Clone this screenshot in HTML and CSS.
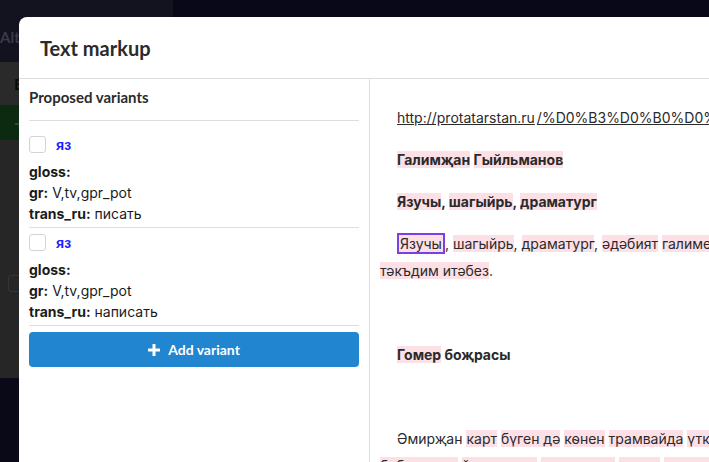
FILE: index.html
```html
<!DOCTYPE html>
<html lang="tt">
<head>
<meta charset="utf-8">
<title>Text markup</title>
<link rel="stylesheet" href="styles.css">
</head>
<body>
<div class="page">
  <div class="topbar">
    <div class="brand">Altai</div>
    <div class="topfill"></div>
  </div>
  <div class="band band-gray"><span class="band-letter">E</span></div>
  <div class="band band-green"><span class="band-plus">+</span></div>
  <div class="band band-panel"><span class="band-box"></span></div>
</div>

<div class="modal">
  <div class="modal-header">Text markup</div>
  <div class="modal-body">
    <aside class="variants">
      <div class="variants-title">Proposed variants</div>
      <div class="variant-list">
        <div class="variant">
          <div class="variant-head">
            <span class="checkbox"></span>
            <span class="lemma">яз</span>
          </div>
          <div class="line"><b>gloss:</b></div>
          <div class="line"><b>gr:</b> V,tv,gpr_pot</div>
          <div class="line"><b>trans_ru:</b> писать</div>
        </div>
        <div class="variant">
          <div class="variant-head">
            <span class="checkbox"></span>
            <span class="lemma">яз</span>
          </div>
          <div class="line"><b>gloss:</b></div>
          <div class="line"><b>gr:</b> V,tv,gpr_pot</div>
          <div class="line"><b>trans_ru:</b> написать</div>
        </div>
      </div>
      <button class="add-btn" type="button">
        <svg class="plus" width="12" height="12" viewBox="0 0 12 12" aria-hidden="true">
          <rect x="4.5" y="0" width="3" height="12" rx="0.5" fill="#fff"/>
          <rect x="0" y="4.5" width="12" height="3" rx="0.5" fill="#fff"/>
        </svg>
        <span>Add variant</span>
      </button>
    </aside>

    <section class="text">
      <p><a class="link" href="#">http://protatarstan.ru</a><a class="link" href="#">/%D0%B3%D0%B0%D0%B8%D0%BC%D2%97%D0%B0%D0%BD</a></p>
      <p class="head"><span class="w">Галимҗан</span> <span class="w">Гыйльманов</span></p>
      <p class="head"><span class="w">Язучы</span>, <span class="w">шагыйрь</span>, <span class="w">драматург</span></p>
      <p><span class="w sel">Язучы</span>, <span class="w">шагыйрь</span>, <span class="w">драматург</span>, <span class="w">әдәбият</span> <span class="w">галиме</span> <span class="w">Габдулла</span> <span class="w">Тукай</span><br><span class="w">тәкъдим итәбез</span>.</p>
      <p class="blank"></p>
      <p class="head"><span class="w">Гомер</span> боҗрасы</p>
      <p class="blank"></p>
      <p>Әмирҗан <span class="w">карт</span> <span class="w">бүген дә</span> <span class="w">көнен</span> <span class="w">трамвайда</span> <span class="w">үткәрде</span><br><span class="w">бабасының</span> <span class="w">йортыннан</span> <span class="w">чыкканнан</span> <span class="w">соңгы</span> <span class="w">көннәр</span> <span class="w">шулай</span></p>
    </section>
  </div>
</div>
</body>
</html>
```

FILE: styles.css
```css
html, body {
  margin: 0;
  padding: 0;
}

body {
  width: 709px;
  height: 462px;
  overflow: hidden;
  background: #0a0918;
  font-family: "Inter", "Noto Sans", sans-serif;
  position: relative;
}

/* background page (dimmed by overlay) */
.page {
  display: flex;
  flex-direction: column;
  width: 709px;
}

.topbar {
  display: flex;
  height: 62px;
}

.brand {
  width: 173px;
  background: #13121f;
  color: #3b3a4c;
  font-family: "Lato", sans-serif;
  font-weight: 700;
  font-size: 15px;
  padding-top: 28px;
  box-sizing: border-box;
}

.topfill {
  flex: 1;
  background: #090818;
}

.band {
  display: flex;
  align-items: center;
  padding-left: 14px;
}

.band-gray {
  height: 43px;
  background: #2a2a2a;
}

.band-letter {
  color: #0a0a0a;
  font-family: "Lato", sans-serif;
  font-weight: 700;
  font-size: 15px;
}

.band-green {
  height: 35px;
  background: #0b2a10;
}

.band-plus {
  color: #2f4a33;
  font-family: "Lato", sans-serif;
  font-weight: 700;
  font-size: 20px;
}

.band-panel {
  height: 238px;
  background: #262626;
  padding-left: 8px;
  align-items: flex-start;
}

.band-box {
  display: block;
  margin-top: 135px;
  width: 30px;
  height: 15px;
  border: 1px solid #363636;
  border-radius: 3px;
}

/* modal */
.modal {
  position: absolute;
  left: 19px;
  top: 17px;
  width: 1000px;
  height: 600px;
  background: #fff;
  border-radius: 8px 8px 0 0;
  overflow: hidden;
  display: flex;
  flex-direction: column;
}

.modal-header {
  height: 61px;
  border-bottom: 1px solid #dedede;
  display: flex;
  align-items: center;
  padding-left: 21px;
  font-family: "Lato", sans-serif;
  font-weight: 700;
  font-size: 20px;
  color: #2b2b2b;
}

.modal-body {
  display: flex;
  flex: 1;
}

.variants {
  width: 330px;
  padding: 0 10px;
  border-right: 1px solid #dedede;
  display: flex;
  flex-direction: column;
}

.variants-title {
  font-family: "Lato", sans-serif;
  font-weight: 700;
  font-size: 15px;
  line-height: 20px;
  color: #2b2b2b;
  padding: 8px 0 13px;
  border-bottom: 1px solid #dedede;
}

.variant-list {
  padding-top: 9px;
}

.variant {
  padding: 6px 0 3px;
  border-bottom: 1px solid #dedede;
}

.variant-head {
  display: flex;
  align-items: center;
  gap: 10px;
  height: 17px;
  margin-bottom: 8px;
}

.checkbox {
  width: 15px;
  height: 15px;
  border: 1px solid #d4d4d5;
  border-radius: 3px;
  background: #fff;
}

.lemma {
  font-family: "Liberation Sans", Arial, sans-serif;
  font-weight: 700;
  font-size: 14px;
  color: #1d1dff;
}

.line {
  font-size: 14px;
  line-height: 21px;
  color: #1b1b1b;
}

.line b {
  font-weight: 700;
}

.add-btn {
  margin-top: 6px;
  height: 35px;
  border: 0;
  border-radius: 4px;
  background: #2185d0;
  color: #fff;
  font-family: "Lato", sans-serif;
  font-weight: 700;
  font-size: 14px;
  display: flex;
  align-items: center;
  justify-content: center;
  gap: 8px;
  padding: 0;
}

/* text panel */
.text {
  flex: 1;
  padding: 10px 0 0 10px;
  overflow: hidden;
  color: #2a2a2a;
  font-size: 14px;
}

.text p {
  margin: 15px 0;
  line-height: 27px;
  white-space: nowrap;
  text-indent: 17px;
}

.text .blank {
  height: 27px;
}

.text .head {
  font-weight: 700;
}

.link {
  color: #2a2a2a;
  text-decoration: underline;
}

.link + .link {
  margin-left: 2px;
}

.w {
  background: #fde0e6;
}

.w.sel {
  border: 2px solid #7a3fe6;
  padding: 0 1px;
}
```
